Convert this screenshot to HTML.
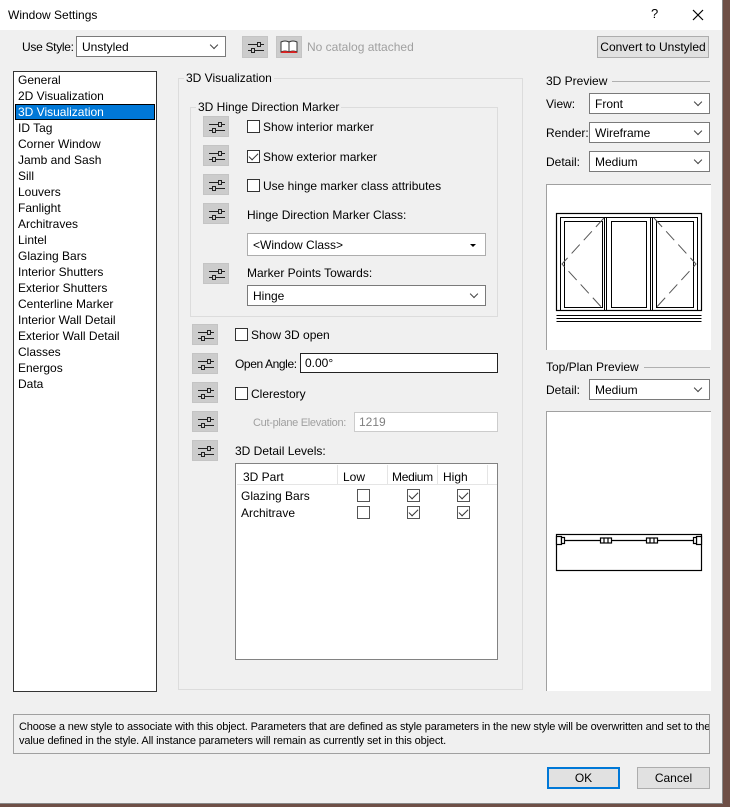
<!DOCTYPE html>
<html><head><meta charset="utf-8"><style>
*{box-sizing:border-box}
body{margin:0;width:730px;height:807px;background:#6e4f46;font-family:"Liberation Sans",sans-serif;font-size:12px;color:#000;position:relative;overflow:hidden}
.a{position:absolute}
#dlg{position:absolute;left:0;top:0;width:722px;height:803px;background:#f0f0f0;outline:1px solid #888}
#tb{position:absolute;left:0;top:0;width:722px;height:30px;background:#fff}
.t{position:absolute;white-space:nowrap;line-height:14px}
.combo{position:absolute;background:#fff;border:1px solid #7a7a7a;height:21px;padding:3px 5px;line-height:14px}
.combo:after{content:"";position:absolute;right:8px;top:5px;width:5px;height:5px;border-right:1px solid #444;border-bottom:1px solid #444;transform:rotate(45deg)}
.ib{position:absolute;width:26px;height:21px;background:#cccccc;border:1px solid #c4c4c4}
.ib svg{position:absolute;left:5px;top:4px}
.cb{position:absolute;width:13px;height:13px;border:1px solid #333;background:#fff}
.cb.g{border-color:#555}
.ck:after{content:"";position:absolute;left:3px;top:0px;width:4px;height:8px;border-right:1px solid #333;border-bottom:1px solid #333;transform:rotate(45deg)}
.grp{position:absolute;border:1px solid #dcdcdc}
.gl{position:absolute;background:#f0f0f0;padding:0 2px;line-height:14px;white-space:nowrap}
.btn{position:absolute;background:#e1e1e1;border:1px solid #adadad;text-align:center;line-height:20px}
.inp{position:absolute;background:#fff;border:1px solid #7a7a7a;padding:2px 4px;line-height:14px}
</style></head><body>
<div id="dlg">
<div id="tb">
<div class="t" style="left:8px;top:8px;font-size:12px">Window Settings</div>
<div class="t" style="left:651px;top:7px;font-size:13px">?</div>
<svg class="a" style="left:692px;top:9px" width="12" height="12"><path d="M1 1L11 11M11 1L1 11" stroke="#000" stroke-width="1.2"/></svg>
</div>
<div class="t" style="left:22px;top:40px;letter-spacing:-0.3px">Use Style:</div>
<div class="combo" style="left:76px;top:36px;width:150px">Unstyled</div>
<div class="ib" style="left:242px;top:36px;height:22px"><svg width="16" height="13"><g stroke="#222" fill="none"><path d="M0 3.5H16M0 9.5H16"/><rect x="9.5" y="1.5" width="3" height="4" fill="#ccc"/><rect x="3.5" y="7.5" width="3" height="4" fill="#ccc"/></g></svg></div>
<div class="ib" style="left:276px;top:36px;height:22px"><svg width="18" height="14" style="left:3px;top:3px"><path d="M1 2Q5 0 9 2Q13 0 17 2V12Q13 10 9 12Q5 10 1 12Z" fill="#fff" stroke="#333"/><path d="M9 2V12" stroke="#333"/><path d="M1 12Q5 10 9 12Q13 10 17 12V13H1Z" fill="#d22"/></svg></div>
<div class="t" style="left:307px;top:40px;color:#a0a0a0">No catalog attached</div>
<div class="btn" style="left:597px;top:36px;width:112px;height:22px">Convert to Unstyled</div>

<div class="a" style="left:13px;top:71px;width:144px;height:621px;background:#fff;border:1px solid #333"></div>
<div class="a" style="left:15px;top:104px;width:140px;height:16px;background:#0078d7;border:1px solid #000"></div>
<div class="a" style="left:18px;top:72px;line-height:16px">
General<br>2D Visualization<br><span style="color:#fff">3D Visualization</span><br>ID Tag<br>Corner Window<br>Jamb and Sash<br>Sill<br>Louvers<br>Fanlight<br>Architraves<br>Lintel<br>Glazing Bars<br>Interior Shutters<br>Exterior Shutters<br>Centerline Marker<br>Interior Wall Detail<br>Exterior Wall Detail<br>Classes<br>Energos<br>Data</div>

<div class="grp" style="left:178px;top:78px;width:345px;height:612px"></div>
<div class="gl" style="left:184px;top:71px">3D Visualization</div>
<div class="grp" style="left:190px;top:107px;width:308px;height:210px"></div>
<div class="gl" style="left:196px;top:100px">3D Hinge Direction Marker</div>

<div class="ib" style="left:203px;top:116px"><svg width="16" height="13"><g stroke="#222" fill="none"><path d="M0 3.5H16M0 9.5H16"/><rect x="9.5" y="1.5" width="3" height="4" fill="#ccc"/><rect x="3.5" y="7.5" width="3" height="4" fill="#ccc"/></g></svg></div>
<div class="ib" style="left:203px;top:145px"><svg width="16" height="13"><g stroke="#222" fill="none"><path d="M0 3.5H16M0 9.5H16"/><rect x="9.5" y="1.5" width="3" height="4" fill="#ccc"/><rect x="3.5" y="7.5" width="3" height="4" fill="#ccc"/></g></svg></div>
<div class="ib" style="left:203px;top:174px"><svg width="16" height="13"><g stroke="#222" fill="none"><path d="M0 3.5H16M0 9.5H16"/><rect x="9.5" y="1.5" width="3" height="4" fill="#ccc"/><rect x="3.5" y="7.5" width="3" height="4" fill="#ccc"/></g></svg></div>
<div class="ib" style="left:203px;top:203px"><svg width="16" height="13"><g stroke="#222" fill="none"><path d="M0 3.5H16M0 9.5H16"/><rect x="9.5" y="1.5" width="3" height="4" fill="#ccc"/><rect x="3.5" y="7.5" width="3" height="4" fill="#ccc"/></g></svg></div>
<div class="ib" style="left:203px;top:263px"><svg width="16" height="13"><g stroke="#222" fill="none"><path d="M0 3.5H16M0 9.5H16"/><rect x="9.5" y="1.5" width="3" height="4" fill="#ccc"/><rect x="3.5" y="7.5" width="3" height="4" fill="#ccc"/></g></svg></div>

<div class="cb" style="left:247px;top:120px"></div><div class="t" style="left:263px;top:120px">Show interior marker</div>
<div class="cb ck" style="left:247px;top:150px"></div><div class="t" style="left:263px;top:150px">Show exterior marker</div>
<div class="cb" style="left:247px;top:179px"></div><div class="t" style="left:263px;top:179px">Use hinge marker class attributes</div>
<div class="t" style="left:247px;top:208px">Hinge Direction Marker Class:</div>
<div class="a" style="left:247px;top:233px;width:239px;height:23px;background:#fff;border:1px solid #adadad;padding:4px 5px;line-height:14px">&lt;Window Class&gt;<span class="a" style="right:9px;top:10px;border-left:3px solid transparent;border-right:3px solid transparent;border-top:3px solid #000"></span></div>
<div class="t" style="left:247px;top:266px">Marker Points Towards:</div>
<div class="combo" style="left:247px;top:285px;width:239px">Hinge</div>

<div class="ib" style="left:192px;top:324px"><svg width="16" height="13"><g stroke="#222" fill="none"><path d="M0 3.5H16M0 9.5H16"/><rect x="9.5" y="1.5" width="3" height="4" fill="#ccc"/><rect x="3.5" y="7.5" width="3" height="4" fill="#ccc"/></g></svg></div>
<div class="ib" style="left:192px;top:353px"><svg width="16" height="13"><g stroke="#222" fill="none"><path d="M0 3.5H16M0 9.5H16"/><rect x="9.5" y="1.5" width="3" height="4" fill="#ccc"/><rect x="3.5" y="7.5" width="3" height="4" fill="#ccc"/></g></svg></div>
<div class="ib" style="left:192px;top:382px"><svg width="16" height="13"><g stroke="#222" fill="none"><path d="M0 3.5H16M0 9.5H16"/><rect x="9.5" y="1.5" width="3" height="4" fill="#ccc"/><rect x="3.5" y="7.5" width="3" height="4" fill="#ccc"/></g></svg></div>
<div class="ib" style="left:192px;top:411px"><svg width="16" height="13"><g stroke="#222" fill="none"><path d="M0 3.5H16M0 9.5H16"/><rect x="9.5" y="1.5" width="3" height="4" fill="#ccc"/><rect x="3.5" y="7.5" width="3" height="4" fill="#ccc"/></g></svg></div>
<div class="ib" style="left:192px;top:440px"><svg width="16" height="13"><g stroke="#222" fill="none"><path d="M0 3.5H16M0 9.5H16"/><rect x="9.5" y="1.5" width="3" height="4" fill="#ccc"/><rect x="3.5" y="7.5" width="3" height="4" fill="#ccc"/></g></svg></div>

<div class="cb" style="left:235px;top:328px"></div><div class="t" style="left:251px;top:328px">Show 3D open</div>
<div class="t" style="left:235px;top:357px;letter-spacing:-0.4px">Open Angle:</div>
<div class="inp" style="left:300px;top:353px;width:198px;height:20px;border-color:#222">0.00°</div>
<div class="cb" style="left:235px;top:387px"></div><div class="t" style="left:251px;top:387px">Clerestory</div>
<div class="t" style="left:253px;top:416px;color:#a0a0a0;font-size:11px;letter-spacing:-0.3px">Cut-plane Elevation:</div>
<div class="inp" style="left:354px;top:412px;width:144px;height:20px;border-color:#ccc;color:#808080">1219</div>
<div class="t" style="left:235px;top:444px">3D Detail Levels:</div>

<div class="a" style="left:235px;top:463px;width:263px;height:197px;background:#fff;border:1px solid #828282"></div>
<div class="a" style="left:237px;top:465px;width:260px;height:20px;border-bottom:1px solid #e5e5e5"></div>
<div class="a" style="left:337px;top:465px;width:1px;height:20px;background:#e5e5e5"></div>
<div class="a" style="left:387px;top:465px;width:1px;height:20px;background:#e5e5e5"></div>
<div class="a" style="left:437px;top:465px;width:1px;height:20px;background:#e5e5e5"></div>
<div class="a" style="left:487px;top:465px;width:1px;height:20px;background:#e5e5e5"></div>
<div class="t" style="left:243px;top:470px">3D Part</div>
<div class="t" style="left:343px;top:470px">Low</div>
<div class="t" style="left:392px;top:470px;letter-spacing:-0.3px">Medium</div>
<div class="t" style="left:443px;top:470px">High</div>
<div class="t" style="left:241px;top:489px">Glazing Bars</div>
<div class="t" style="left:241px;top:506px">Architrave</div>
<div class="cb g" style="left:357px;top:489px"></div><div class="cb g ck" style="left:407px;top:489px"></div><div class="cb g ck" style="left:457px;top:489px"></div>
<div class="cb g" style="left:357px;top:506px"></div><div class="cb g ck" style="left:407px;top:506px"></div><div class="cb g ck" style="left:457px;top:506px"></div>

<div class="t" style="left:546px;top:74px">3D Preview</div>
<div class="a" style="left:612px;top:81px;width:98px;height:1px;background:#b0b0b0"></div>
<div class="t" style="left:546px;top:97px">View:</div>
<div class="combo" style="left:589px;top:93px;width:121px">Front</div>
<div class="t" style="left:546px;top:126px">Render:</div>
<div class="combo" style="left:589px;top:122px;width:121px">Wireframe</div>
<div class="t" style="left:546px;top:155px">Detail:</div>
<div class="combo" style="left:589px;top:151px;width:121px">Medium</div>
<div class="a" style="left:546px;top:184px;width:165px;height:166px;background:#fff;border-top:1px solid #a0a0a0;border-left:1px solid #a0a0a0"></div>
<svg class="a" style="left:540px;top:170px" width="190" height="170">
<g fill="none" stroke="#000" stroke-width="1">
<rect x="16.5" y="43.5" width="145" height="97" stroke-width="1.2"/>
<rect x="20.5" y="47.5" width="137" height="93"/>
<rect x="24.5" y="51.5" width="38" height="86"/>
<rect x="64.5" y="47.5" width="2" height="93"/>
<rect x="110.5" y="47.5" width="2" height="93"/>
<rect x="71.5" y="51.5" width="35" height="86"/>
<rect x="116.5" y="51.5" width="37" height="86"/>
<path d="M16.5 145.5H161.5M16.5 148.5H161.5M16.5 151.5H161.5" />
<path d="M64 48L22 94L64 140M114 48L156 94L114 140" stroke="#555" stroke-dasharray="12 6"/>
</g></svg>

<div class="t" style="left:546px;top:360px">Top/Plan Preview</div>
<div class="a" style="left:644px;top:367px;width:66px;height:1px;background:#b0b0b0"></div>
<div class="t" style="left:546px;top:383px">Detail:</div>
<div class="combo" style="left:589px;top:379px;width:121px">Medium</div>
<div class="a" style="left:546px;top:411px;width:165px;height:280px;background:#fff;border-top:1px solid #a0a0a0;border-left:1px solid #a0a0a0"></div>
<svg class="a" style="left:540px;top:520px" width="190" height="80">
<g fill="none" stroke="#000" stroke-width="1.2">
<rect x="16.5" y="14.5" width="145" height="36"/>
<path d="M24 20.5H154"/>
<rect x="16.5" y="16.5" width="5" height="8" fill="#fff"/><rect x="21.5" y="17.5" width="3" height="6" fill="#fff"/>
<rect x="156.5" y="16.5" width="5" height="8" fill="#fff"/><rect x="153.5" y="17.5" width="3" height="6" fill="#fff"/>
<rect x="60.5" y="18" width="11" height="5" fill="#fff"/><path d="M64 18V23M68 18V23"/>
<rect x="106.5" y="18" width="11" height="5" fill="#fff"/><path d="M110 18V23M114 18V23"/>
</g></svg>

<div class="a" style="left:13px;top:714px;width:697px;height:40px;border:1px solid #a0a0a0;padding:5px 5px;line-height:14px;white-space:nowrap;font-size:11px;letter-spacing:-0.15px;overflow:hidden">Choose a new style to associate with this object. Parameters that are defined as style parameters in the new style will be overwritten and set to the<br>value defined in the style. All instance parameters will remain as currently set in this object.</div>
<div class="btn" style="left:547px;top:767px;width:73px;height:22px;border:2px solid #0078d7;line-height:18px">OK</div>
<div class="btn" style="left:637px;top:767px;width:73px;height:22px">Cancel</div>
</div>
</body></html>
